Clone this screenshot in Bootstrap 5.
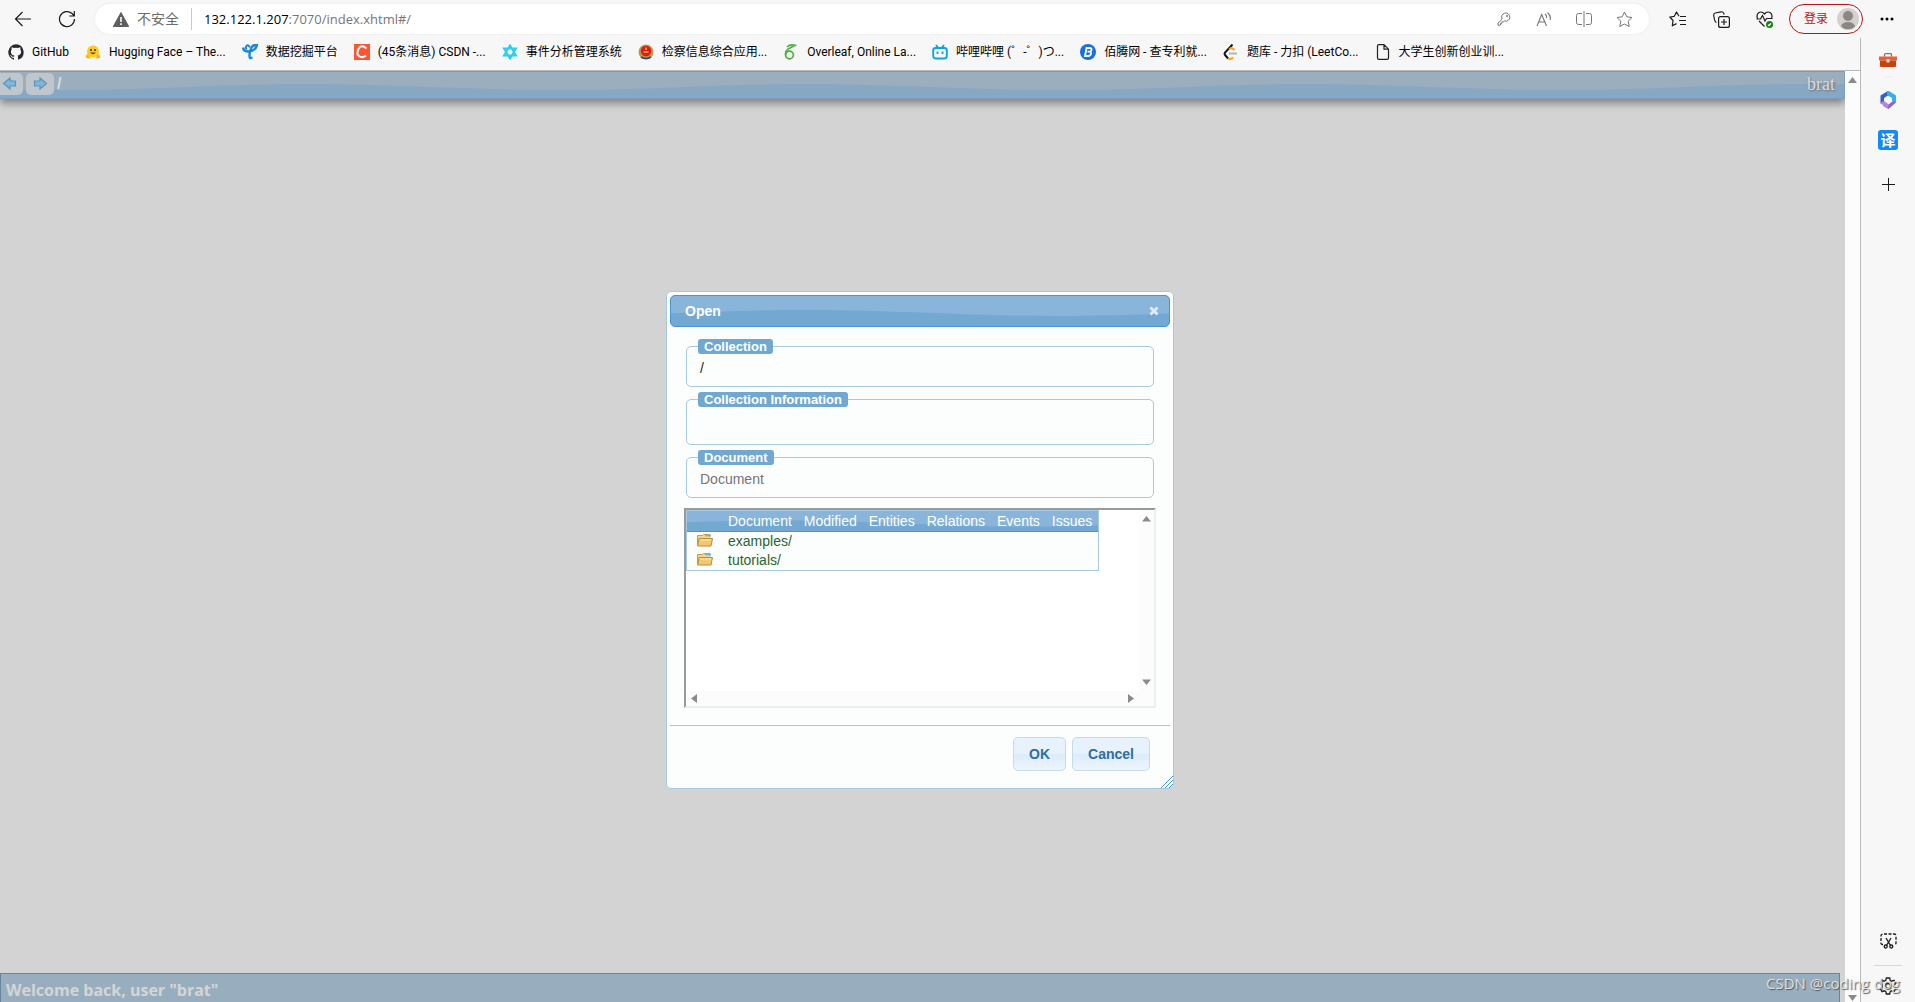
<!DOCTYPE html>
<html lang="zh-CN">
<head>
<meta charset="utf-8">
<meta name="viewport" content="width=device-width, initial-scale=1">
<title>brat</title>
<link href="https://cdn.jsdelivr.net/npm/bootstrap@5.3.0/dist/css/bootstrap.min.css" rel="stylesheet">
<style>
  :root { --wave: url("data:image/svg+xml,%3Csvg xmlns='http://www.w3.org/2000/svg' width='500' height='100'%3E%3Cpath d='M-114 55C-24 55 46 49 136 49S296 55 386 55S546 49 636 49V100H-114Z' fill='%235c9ccc' fill-opacity='.5'/%3E%3C/svg%3E"); }
  body { background: #f7f7f7; font: 14px/20px "Liberation Sans", "Noto Sans CJK SC", sans-serif; color: #222; }
  svg { display: block; flex: none; }
  .bare { border: 0; background: none; padding: 0; display: flex; align-items: center; justify-content: center; flex: none; color: #1b1b1b; }
  .ui-text { font-family: "Open Sans", "Noto Sans CJK SC", sans-serif; }
  .toolbar { height: 38px; padding: 0 6px 0 1px; }
  .tool { width: 44px; height: 30px; }
  .omnibox { height: 30px; border-radius: 15px; background: #fff; margin: 0 6px; padding: 0 5px 0 18px; box-shadow: 0 0 3px rgba(0,0,0,.07); }
  .omnibox .tool { width: 40px; color: #767676; }
  .insecure { color: #6c6c6c; }
  .omnibox .vr { margin: 4px 12px; }
  .urltext { font-size: 13px; color: #767676; text-decoration: none; }
  .urltext span { color: #000; }
  .login { width: 74px; height: 30px; border: 1px solid #b3151b; border-radius: 15px; color: #b3151b; font-size: 12px; margin: 0 2px; padding: 0 3px 0 14px; gap: 9px; background: none; }
  .bookmarks { height: 33px; border-bottom: 1px solid #b8b8b8; padding: 0 8px 4px; gap: 16px; font-size: 12px; white-space: nowrap; overflow: hidden; font-family: Roboto, "Noto Sans CJK SC", sans-serif; }
  .bookmarks a { display: flex; align-items: center; gap: 8px; color: #000; text-decoration: none; flex: none; line-height: 28px; }
  .rail { width: 55px; border-left: 1px solid #b8b8b8; padding: 2px 0 0; }
  .rail .bare { width: 54px; height: 40px; }
  .rail .gear { height: 32px; }
  .rail hr { width: 28px; margin: 4px 0; color: #777; }
  .tr-tile { width: 20px; height: 20px; border-radius: 3px; background: #128af8; color: #fff; font-size: 15px; line-height: 20px; font-weight: bold; }
  .scroll { background: #fcfcfc; color: #8b8b8b; }
  .vscroll { width: 15px; padding: 6px 0 1px; }
  .stage { background: #d3d3d3; }
  .topbar { height: 28px; background: var(--wave) 50% 50% repeat-x, #99aebf; border: 1px solid #7c9eba; border-left: 0; box-shadow: 0 4px 8px rgba(0,0,0,.4); padding: 0 9px 3px 0; gap: 3px; }
  .topbar::before { content: ""; position: absolute; inset: 0; background: #a0b0bc; opacity: .35; }
  .topbar > * { position: relative; }
  .navkey { width: 28px; height: 22px; border-radius: 5px; background: #bfc6cc; }
  .navkey:first-child { margin-left: -5px; }
  .slash { font-size: 16px; font-weight: bold; color: #dcdcdc; }
  .logo { font: 18px/22px "Liberation Serif", serif; color: #dedbd7; text-shadow: 1px 1px 2px #6d6d6d; text-decoration: none; }
  .statusbar { height: 29px; margin-right: 5px; background: #98aebf; border: 1px solid #6b849d; border-bottom: 0; padding: 0 5px; font-size: 16px; line-height: 32px; font-weight: bold; color: #d5d5d5; }
  .holder { padding: 8px 5px 0 0; }
  .dlg { width: 508px; background: #fcfdfd; border: 1px solid #a6c9e2; border-radius: 5px; padding: 3px; }
  .dlg-title { height: 32px; border: 1px solid #4297d7; border-radius: 5px; background: var(--wave) 50% 50% repeat-x, #88b5d9; color: #fff; padding: 0 8px 0 14px; }
  .dlg-title h1 { font-size: 14px; line-height: 30px; font-weight: bold; margin: 0; }
  .dlg-title .bare { width: 14px; height: 16px; }
  .dlg-main { padding: 12px 16px 17px; }
  .fs { position: relative; border: 1px solid #a6c9e2; border-radius: 5px; padding: 8px 13px; height: 41px; margin-top: 7px; background: #fcfdfd; }
  .fs + .fs { margin-top: 12px; }
  .fs.tall { height: 46px; }
  .fs label, .fs .cap { position: absolute; top: -8px; left: 11px; height: 15px; line-height: 15px; background: #70a8d2; color: #fff; border-radius: 3px; padding: 0 6px; font-size: 13px; font-weight: bold; }
  .fs input { display: block; border: 0; outline: 0; padding: 0; width: 100%; height: 26px; background: transparent; color: #222; }
  .fs input::placeholder { color: #757575; opacity: 1; }
  .lister { margin: 10px -2px 0; height: 200px; border: 2px solid #eee; border-color: #9a9a9a #eee #eee #9a9a9a; background: #fff; display: grid; grid-template: 1fr 15px / 1fr 15px; }
  .lister table { border: 1px solid #a6c9e2; line-height: 19px; align-self: start; justify-self: start; border-collapse: separate; border-spacing: 0; background: #fcfdfd; }
  .lister th { font-weight: normal; color: #fff; padding: 0 6px; line-height: 20px; border-bottom: 1px solid #4297d7; }
  .lister thead { background: var(--wave) 50% 50% repeat-x, #88b5d9; }
  .lister td { padding: 0 6px; }
  .lister td:first-child { width: 35px; padding: 0 0 3px 10px; }
  .lister a { color: #2b652b; text-decoration: none; }
  .dlg-foot { border-top: 1px solid #a6c9e2; padding: 11px 20px 14px; gap: 6px; }
  .dlg-foot .btn { --bs-btn-padding-x: 15px; --bs-btn-padding-y: 6px; --bs-btn-font-size: 14px; --bs-btn-line-height: 20px; --bs-btn-font-weight: bold; --bs-btn-border-radius: 5px; --bs-btn-color: #2e6e9e; --bs-btn-border-color: #c5dbec; background: linear-gradient(#e8f2fd 0 50%, #dcebf9 51%, #edf5fd); height: 34px; }
  .grip { position: absolute; right: 0; bottom: 0; }
  .watermark { position: absolute; right: 15px; bottom: 9px; font-size: 15px; color: rgba(235,235,235,.9); text-shadow: 1px 1px 1px #555; font-family: "Open Sans", sans-serif; pointer-events: none; }
</style>
<script src="https://cdn.jsdelivr.net/npm/bootstrap@5.3.0/dist/js/bootstrap.bundle.min.js"></script>
</head>
<body class="vh-100 d-flex flex-column overflow-hidden position-relative">

<svg width="0" height="0" class="position-absolute" aria-hidden="true">
  <symbol id="folder" viewBox="0 0 16 14"><path d="M.5 12.500V2.500h5l1-1h6.500v3" fill="#f4d58a" stroke="#c79a46"/><path d="M8 2.500h6" stroke="#5bbfe8" stroke-width="1.500"/><path d="M2 5.500h13.500l-1.500 7.500H.7z" fill="#eec873" stroke="#c08d35"/><path d="M3 7h11" stroke="#fbe9b5"/></symbol>
  <symbol id="arrow" viewBox="0 0 14 13"><path d="M13 4v5H7.500v3L1 6.500 7.500 1v3z" fill="#7fb6dc" stroke="#5a94bd" stroke-width="1.200"/></symbol>
</svg>

<header class="toolbar d-flex align-items-center flex-shrink-0 ui-text">
  <button class="bare tool" aria-label="返回"><svg width="18" height="16" fill="none" stroke="currentColor" stroke-width="1.200"><path d="M17 8H1.500M8.500 1 1.500 8l7 7"/></svg></button>
  <button class="bare tool" aria-label="刷新"><svg width="18" height="18" fill="none" stroke="currentColor" stroke-width="1.200"><path d="M16.500 9A7.500 7.500 0 1 1 14 3.500L16 5.500M16.300 1v5h-5"/></svg></button>
  <div class="omnibox d-flex align-items-center flex-grow-1">
    <svg width="16" height="15"><path d="M8 .5 15.700 14.500H.3z" fill="#5f5f5f" stroke="#5f5f5f" stroke-linejoin="round"/><path d="M8 5v5M8 11.300v1.700" stroke="#fff" stroke-width="1.600"/></svg>
    <span class="insecure ms-2">不安全</span>
    <span class="vr"></span>
    <a class="urltext flex-grow-1" href="#"><span>132.122.1.207</span>:7070/index.xhtml#/</a>
    <button class="bare tool" aria-label="密码"><svg width="14" height="14" fill="none" stroke="currentColor"><path d="M5.200 7.200A4.100 4.100 0 1 1 7.500 9L6.300 9.800H5v1.500H3.500V13L1 13.400V11z"/><circle cx="10" cy="4" r=".7"/></svg></button>
    <button class="bare tool" aria-label="朗读"><svg width="16" height="15" fill="none" stroke="currentColor" stroke-width="1.100"><path d="M1 14 5.700 2.500 10.500 14M2.500 10h6.500M9 2q2 1.500 1.500 4M11.500.5q4 3.500 2.500 7.500"/></svg></button>
    <button class="bare tool" aria-label="分屏"><svg width="16" height="16" fill="none" stroke="currentColor"><path d="M6 2.500H2.500Q.5 2.500.5 4.500v7q0 2 2 2H6M10 2.500h3.500q2 0 2 2v7q0 2-2 2H10M8 0v16"/></svg></button>
    <button class="bare tool" aria-label="收藏"><svg width="17" height="17" fill="none" stroke="currentColor" stroke-linejoin="round"><path d="M8.500 1 10.800 5.800 16 6.500 12.200 10.200 13.200 15.500 8.500 13 3.800 15.500 4.800 10.200 1 6.500 6.200 5.800z"/></svg></button>
  </div>
  <button class="bare tool" aria-label="收藏夹"><svg width="17" height="16" fill="none" stroke="currentColor" stroke-width="1.200" stroke-linejoin="round"><path d="M10 5.300 7.500 1 5.300 5.300.8 6 4 9.500 3.300 14.800 7.500 12.600M11 5.500h6M10 9.500h7M11 13.500h6"/></svg></button>
  <button class="bare tool" aria-label="集锦"><svg width="17" height="17" fill="none" stroke="currentColor" stroke-width="1.200"><rect x="5.600" y="5.600" width="10.800" height="10.800" rx="2"/><path d="M11 8v6M8 11h6M3.500 11.500Q2 11 1.600 9L.7 4.500q-.3-2 1.500-2.500L8 .8q2-.3 2.800 1.700l.4 1"/></svg></button>
  <button class="bare tool" aria-label="浏览器健康"><svg width="18" height="17" fill="none" stroke="currentColor" stroke-width="1.200"><path d="M1.500 7.500Q0 3.500 3 1.500q3-1.500 5.500 1.500Q11 0 14 1.500q3 2 1.500 6M.5 8h4l2-3.500L9 10l1.500-2.500h6M3 10l5.500 5.500"/><circle cx="13.500" cy="13.500" r="3.500" fill="#148214" stroke="none"/><path d="m12 13.800 1 .9 2-2.400" stroke="#fff"/></svg></button>
  <button class="login d-flex align-items-center"><span class="text-nowrap">登录</span><svg width="22" height="22"><circle cx="11" cy="11" r="11" fill="#d3d0cd"/><circle cx="11" cy="8" r="5" fill="#8b8784"/><path d="M4 18.500q1-4.500 7-4.500t7 4.500a10 10 0 0 1-14 0" fill="#8b8784"/></svg></button>
  <button class="bare tool" aria-label="更多"><svg width="14" height="4"><circle cx="2" cy="2" r="1.500"/><circle cx="7" cy="2" r="1.500"/><circle cx="12" cy="2" r="1.500"/></svg></button>
</header>

<div class="d-flex flex-grow-1 overflow-hidden">
  <div class="d-flex flex-column flex-grow-1 overflow-hidden">
    <nav class="bookmarks d-flex align-items-center flex-shrink-0">
      <a href="#"><svg width="16" height="16"><path d="M8 .2a8 8 0 0 0-2.500 15.500c.4 0 .5-.2.500-.4v-1.500c-2.200.5-2.700-1-2.700-1-.4-.9-.9-1.200-.9-1.200-.7-.5.1-.5.1-.5.800.1 1.200.8 1.200.8.700 1.200 1.900.9 2.300.7.100-.5.300-.9.500-1.100-1.800-.2-3.600-.9-3.600-4 0-.9.300-1.600.8-2.100-.1-.2-.4-1 .1-2.100 0 0 .7-.2 2.200.8a7.500 7.500 0 0 1 4 0c1.500-1 2.200-.8 2.200-.8.400 1.100.2 1.900.1 2.100.5.600.8 1.300.8 2.100 0 3.100-1.900 3.800-3.700 4 .3.300.6.800.6 1.500v2.200c0 .2.100.5.600.4A8 8 0 0 0 8 .2" fill="#24292f"/></svg>GitHub</a>
      <a href="#"><svg width="16" height="16"><circle cx="8" cy="7.500" r="6" fill="#ffc91f"/><path d="M1 14q-1-3 2-4l3 4.500zM15 14q1-3-2-4l-3 4.500z" fill="#ffb31a"/><circle cx="6" cy="6" r="1" fill="#3a2d12"/><circle cx="10" cy="6" r="1" fill="#3a2d12"/><path d="M5 8.500q3 3.500 6 0z" fill="#7a3b1a"/></svg>Hugging Face – The...</a>
      <a href="#"><svg width="16" height="16" fill="none" stroke="#1587dc"><path d="M1 3.500q.5 4 5.500 4 7-.5 8.500-6.500-4-.5-5.500 2.500Q6.500 9 8 14.500" stroke-width="2.400"/><path d="M8 3.500Q6 0 4.500 2t.5 3M7.500 14.500l3-1" stroke-width="2"/></svg>数据挖掘平台</a>
      <a href="#"><svg width="16" height="16"><path d="M0 0h16v16H0z" fill="#fc5531"/><path d="M12.500 4.500Q7-.1 4.500 5t.5 7q3 2.500 7-.5" fill="none" stroke="#fff" stroke-width="2"/></svg>(45条消息) CSDN -...</a>
      <a href="#"><svg width="16" height="16" fill="none" stroke="#2bcfe9" stroke-width="2"><path d="M8 1.500 14 11.500H2zM8 14.500 2 4.500h12z"/></svg>事件分析管理系统</a>
      <a href="#"><svg width="16" height="16"><circle cx="8" cy="8" r="7.500" fill="#b9974b"/><circle cx="8" cy="7" r="5.200" fill="#e3171b"/><path d="M5.500 8h5M8 3.500V6" stroke="#f5bf35" stroke-width="1.500"/><path d="M3 13q5 3 10 0" stroke="#37476b" stroke-width="1.500" fill="none"/></svg>检察信息综合应用...</a>
      <a href="#"><svg width="16" height="16" fill="none" stroke="#4cae40" stroke-width="1.700"><circle cx="6.500" cy="11" r="3.900"/><path d="M2.600 11Q2 6 7 4l5-2.700Q7 0 4 3"/></svg>Overleaf, Online La...</a>
      <a href="#"><svg width="16" height="16" fill="none" stroke="#0fa4dd" stroke-width="1.900"><rect x="1.200" y="4" width="13.600" height="10.500" rx="2.500"/><path d="M4 1l2 2.500M12 1l-2 2.500M5.500 7.500v2.500M10.500 7.500v2.500"/></svg>哔哩哔哩 (゜-゜)つ...</a>
      <a href="#"><svg width="16" height="16"><circle cx="8" cy="8" r="8" fill="#176fe0"/><path d="M6.500 4h3q2.500 0 2 2-.3 1.500-2 1.700Q11.300 8 11 9.700 10.500 12 8 12H5z M7.500 7.700h2" fill="none" stroke="#fff" stroke-width="1.800"/></svg>佰腾网 - 查专利就...</a>
      <a href="#"><svg width="16" height="16" fill="none" stroke-width="2"><path d="M9.500.5 2 8.500q-1 1.500.5 3l2.500 3" stroke="#111"/><path d="M5 14.500q2.500 1.500 5-1M6 5.500l2-1.500q1.500 0 3.500 2" stroke="#ffa116"/><path d="M6 9.500h8" stroke="#b3b3b3"/></svg>题库 - 力扣 (LeetCo...</a>
      <a href="#"><svg width="16" height="16" fill="none" stroke="#222" stroke-width="1.200"><path d="M2.500 2q0-1.300 1.300-1.300H9l4.500 4.500V14q0 1.300-1.300 1.300H3.800Q2.500 15.300 2.500 14zM9 .7v4.500h4.500"/></svg>大学生创新创业训...</a>
    </nav>

    <div class="d-flex flex-grow-1 overflow-hidden">
      <main class="stage d-flex flex-column flex-grow-1 overflow-hidden">
        <div class="topbar position-relative d-flex align-items-center flex-shrink-0">
          <button class="bare navkey" aria-label="Previous"><svg width="15" height="13"><use href="#arrow"/></svg></button>
          <button class="bare navkey" aria-label="Next"><svg width="15" height="13"><use href="#arrow" transform="matrix(-1 0 0 1 15 0)"/></svg></button>
          <span class="slash">/</span>
          <a class="logo ms-auto" href="#">brat</a>
        </div>

        <div class="holder flex-grow-1 d-flex align-items-center justify-content-center">
          <section class="dlg position-relative" role="dialog" aria-labelledby="dlgTitle">
            <div class="dlg-title d-flex align-items-center justify-content-between">
              <h1 id="dlgTitle">Open</h1>
              <button class="bare" aria-label="Close"><svg width="10" height="10"><path d="m1.500 1.500 7 7m0-7-7 7" stroke="#e0edf8" stroke-width="2.800"/></svg></button>
            </div>
            <form class="dlg-main">
              <div class="fs"><label for="coll">Collection</label><input id="coll" type="text" value="/"></div>
              <div class="fs tall"><span class="cap">Collection Information</span></div>
              <div class="fs"><label for="doc">Document</label><input id="doc" type="text" placeholder="Document"></div>
              <div class="lister">
                <table>
                  <thead><tr><th></th><th>Document</th><th>Modified</th><th>Entities</th><th>Relations</th><th>Events</th><th>Issues</th></tr></thead>
                  <tbody>
                    <tr><td><svg width="16" height="14"><use href="#folder"/></svg></td><td colspan="6"><a href="#">examples/</a></td></tr>
                    <tr><td><svg width="16" height="14"><use href="#folder"/></svg></td><td colspan="6"><a href="#">tutorials/</a></td></tr>
                  </tbody>
                </table>
                <div class="scroll d-flex flex-column justify-content-between align-items-center py-1">
                  <svg width="9" height="9"><path d="M0 7.500h9L4.500 2z" fill="currentColor"/></svg>
                  <svg width="9" height="9"><path d="M0 1.500h9L4.500 7z" fill="currentColor"/></svg>
                </div>
                <div class="scroll d-flex justify-content-between align-items-center px-1">
                  <svg width="9" height="9"><path d="M7 0v9L1 4.500z" fill="currentColor"/></svg>
                  <svg width="9" height="9"><path d="M2 0v9l6-4.500z" fill="currentColor"/></svg>
                </div>
                <div class="scroll"></div>
              </div>
            </form>
            <div class="dlg-foot d-flex justify-content-end">
              <button class="btn">OK</button>
              <button class="btn">Cancel</button>
            </div>
            <svg class="grip" width="12" height="12" stroke="#4297d7"><path d="M0 12 12 0M4 12l8-8M8 12l4-4"/></svg>
          </section>
        </div>

        <div class="statusbar ui-text flex-shrink-0">Welcome back, user "brat"</div>
      </main>
      <div class="scroll vscroll d-flex flex-column justify-content-between align-items-center flex-shrink-0">
        <svg width="9" height="6"><path d="M0 6h9L4.500 0z" fill="currentColor"/></svg>
        <svg width="9" height="6"><path d="M0 0h9L4.500 6z" fill="currentColor"/></svg>
      </div>
    </div>
  </div>

  <aside class="rail d-flex flex-column align-items-center flex-shrink-0">
    <button class="bare" aria-label="工具"><svg width="18" height="14"><path d="M5.500 3.500v-2Q5.500.7 6.500.7h5q1 0 1 .8v2" fill="none" stroke="#777" stroke-width="1.200"/><path d="M0 3.500h18v4H0z" fill="#e8602c"/><path d="M1 7.500h16V13q0 1-1 1H2q-1 0-1-1z" fill="#c9410f"/><path d="M7.500 6h3v3.500h-3z" fill="#d5dbe0"/></svg></button>
    <button class="bare" aria-label="Microsoft 365"><svg width="18" height="18"><path d="M9 0 1.500 4.500v8L5 11V7l5.500-3.500z" fill="#3a5bd0"/><path d="M8 .5 10 0l7 4.500V12l-4-2V7L8 4z" fill="#35b0ea"/><path d="M17 11.500 9.500 18l-6-3.500L9 14l5-4z" fill="#8e62d2"/><path d="m1 12 4-2 5 3.500L8.500 17z" fill="#b983e0"/></svg></button>
    <button class="bare" aria-label="翻译"><span class="tr-tile ui-text">译</span></button>
    <button class="bare mt-1" aria-label="添加"><svg width="13" height="13" stroke="currentColor"><path d="M6.500 0v13M0 6.500h13"/></svg></button>
    <button class="bare mt-auto" aria-label="截图"><svg width="17" height="16" fill="none" stroke="currentColor" stroke-width="1.300"><path d="M3 11.500H2.500q-1.500 0-1.500-1.500V3q0-2 2-2h11q2 0 2 2v7q0 1.500-1.500 1.500H14" stroke-dasharray="3 1.500"/><path d="m6 5 4.500 7.500M11 5l-4.500 7.500"/><circle cx="5.700" cy="13.500" r="1.500"/><circle cx="11.300" cy="13.500" r="1.500"/></svg></button>
    <hr>
    <button class="bare gear" aria-label="设置"><svg width="18" height="18" fill="none" stroke="currentColor" stroke-width="1.300"><path d="m7.300 1-.5 2.300-1.500.9L3 3.400 1.300 6.400l1.700 1.700v1.800l-1.700 1.700L3 14.600l2.300-.8 1.500.9.500 2.300h3.400l.5-2.300 1.500-.9 2.300.8 1.700-3-1.700-1.700V8.100l1.700-1.700-1.700-3-2.300.8-1.500-.9-.5-2.300z"/><circle cx="9" cy="9" r="2.500"/></svg></button>
  </aside>
</div>
<div class="watermark">CSDN @coding dog</div>
</body>
</html>
